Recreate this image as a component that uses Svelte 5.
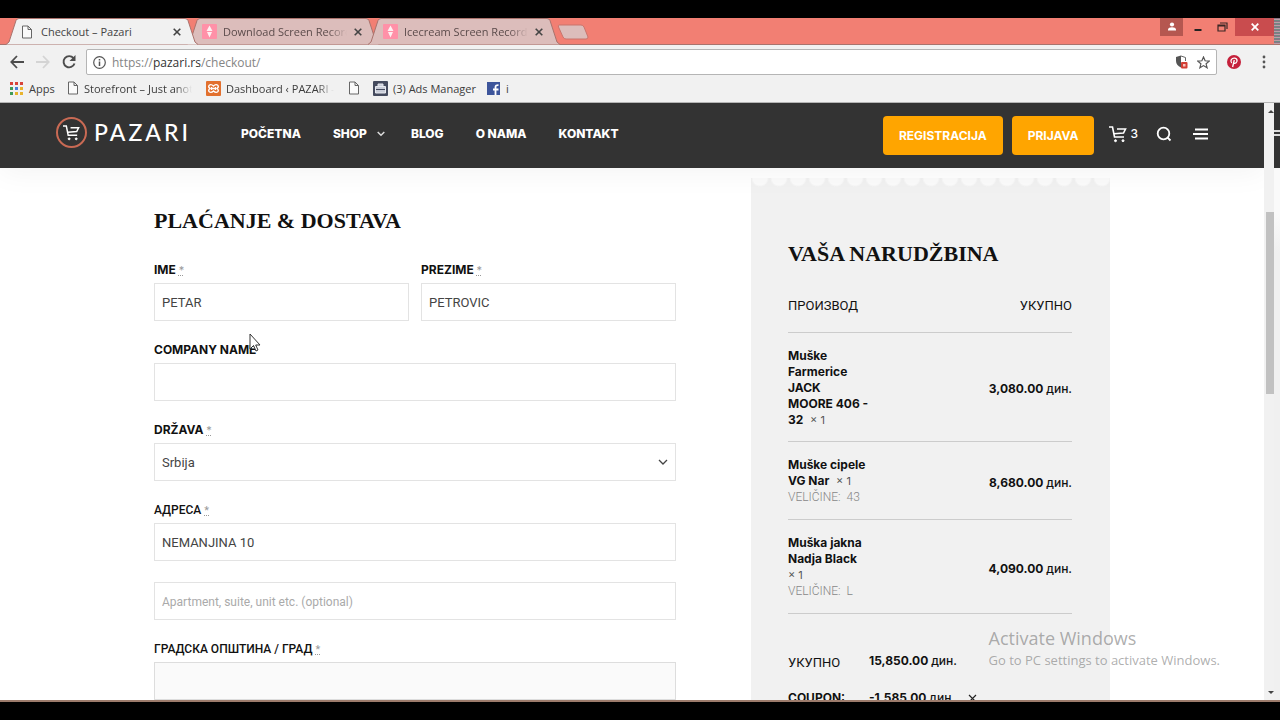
<script>
  const tabs = [
    { title: 'Checkout – Pazari', active: true },
    { title: 'Download Screen Recorder', active: false },
    { title: 'Icecream Screen Recorder', active: false }
  ];
  const nav = ['POČETNA', 'SHOP', 'BLOG', 'O NAMA', 'KONTAKT'];
  const items = [
    { name: 'Muške Farmerice JACK MOORE\u00a0406\u00a0- 32', meta: '', price: '3,080.00' },
    { name: 'Muške cipele VG Nar', meta: 'VELIČINE:  43', price: '8,680.00' },
    { name: 'Muška jakna Nadja Black', meta: 'VELIČINE:  L', price: '4,090.00' }
  ];
  const dots = ['#d8443a', '#d8443a', '#d8443a', '#3f9b56', '#4a80d8', '#e8b32c', '#3f9b56', '#e8b32c', '#e8b32c'];
</script>

{#snippet page()}
  <svg class="page-icon" width="12" height="14" viewBox="0 0 12 14" aria-hidden="true">
    <path d="M1.5 1h5.5l3.5 3.5V13h-9zM7 1v3.500h3.500" fill="#fafafa" stroke="#666" />
  </svg>
{/snippet}

{#snippet cart(size)}
  <svg width={size} height={size} viewBox="0 0 18 18" fill="none" stroke="#fff" stroke-width="1.600" aria-hidden="true">
    <path d="M0 2h3.500l2 10h9.500M5 8.800l9.500-.8L16.500 4H8" />
    <circle cx="6.500" cy="15.700" r="1" fill="#fff" stroke-width="1" />
    <circle cx="14" cy="15.700" r="1" fill="#fff" stroke-width="1" />
  </svg>
{/snippet}

{#snippet required()}
  <abbr title="required">*</abbr>
{/snippet}

<div class="screen">
  <div class="window">
    <div class="tabstrip">
      <div class="tabs">
        {#each tabs as tab}
          <div class="tab" class:active={tab.active}>
            <svg class="shape" viewBox="0 0 192 27" preserveAspectRatio="none" aria-hidden="true">
              <path d="M0 26.5 L3 24 L10 2.5 Q11 .5 13 .5 H179 Q181 .5 182 2.5 L189 24 L192 26.5" />
            </svg>
            {#if tab.active}
              {@render page()}
            {:else}
              <svg width="15" height="15" viewBox="0 0 15 15" aria-hidden="true">
                <rect width="15" height="15" rx="1" fill="#ff91a8" />
                <path d="M7.500 1.500L10.500 7h-6zM5 8h5L7.500 13.500z" fill="#fff0f2" />
              </svg>
            {/if}
            <span class="tab-title">{tab.title}</span>
            <button class="tab-close" aria-label="Close tab">
              <svg width="8" height="8" viewBox="0 0 8 8"><path d="M.7.7l6.600 6.600M7.300.7L.7 7.300" stroke="#444" stroke-width="1.600" /></svg>
            </button>
          </div>
        {/each}
        <button class="new-tab" aria-label="New tab">
          <svg width="32" height="17" viewBox="0 0 32 17"><path d="M2 1h22q2 0 3 2l4 10q0 2-2 2H9q-2 0-3-2L1.500 3Q1 1 2 1z" fill="#dcbdbb" stroke="#c9756d" /></svg>
        </button>
      </div>
      <div class="controls">
        <button class="user" aria-label="Profile">
          <svg width="10" height="10" viewBox="0 0 10 10"><circle cx="5" cy="2.500" r="2.100" fill="#fff" /><path d="M1 8.500V7.300Q1.500 5.300 5 5.300T9 7.300v1.200z" fill="#fff" /></svg>
        </button>
        <button aria-label="Minimize"><svg width="10" height="10" viewBox="0 0 10 10"><path d="M1.500 8h7" stroke="#222" stroke-width="2" /></svg></button>
        <button aria-label="Restore"><svg width="11" height="10" viewBox="0 0 11 10" fill="none" stroke="#3a2725"><path d="M1 3h7v6H1zM1 3.800h7M3 1h7v6" stroke-width="1.200" /></svg></button>
        <button class="close" aria-label="Close"><svg width="8" height="8" viewBox="0 0 8 8"><path d="M.7.7l6.600 6.600M7.300.7L.7 7.300" stroke="#fff" stroke-width="1.800" /></svg></button>
        <span class="noise"></span>
      </div>
    </div>

    <div class="toolbar">
      <button aria-label="Back"><svg width="14" height="14" viewBox="0 0 14 14" fill="none" stroke="#4c4c4c" stroke-width="1.800"><path d="M14 7H1.500M7 1L1.300 7 7 13" /></svg></button>
      <button aria-label="Forward"><svg width="14" height="14" viewBox="0 0 14 14" fill="none" stroke="#d4d4d4" stroke-width="1.800"><path d="M0 7h12.500M7 1l5.700 6L7 13" /></svg></button>
      <button aria-label="Reload"><svg width="14" height="14" viewBox="0 0 14 14"><path d="M11.500 3.200A5.600 5.600 0 1 0 12.500 8.500" fill="none" stroke="#4c4c4c" stroke-width="1.900" /><path d="M13.500 0v6h-6z" fill="#4c4c4c" /></svg></button>
      <div class="omnibox">
        <svg width="13" height="13" viewBox="0 0 13 13" fill="none" stroke="#555"><circle cx="6.500" cy="6.500" r="5.800" stroke-width="1.200" /><path d="M6.500 5.500v4.500M6.500 3v1.500" stroke-width="1.500" /></svg>
        <div class="url"><span>https://</span>pazari.rs<span>/checkout/</span></div>
        <svg width="13" height="14" viewBox="0 0 13 14" aria-hidden="true"><path d="M6 .5L1 2v4q0 4 5 6.500z" fill="#555" /><path d="M6 1l4.500 1.500V6" fill="none" stroke="#666" /><rect x="6" y="7" width="6.500" height="6.500" rx="1" fill="#d33f35" /><rect x="8" y="9" width="2.500" height="2.500" fill="#f5c4bf" /></svg>
        <svg width="13" height="13" viewBox="0 0 13 13" aria-hidden="true"><path d="M6.500 1l1.600 3.800 4.200.3-3.200 2.700 1 4-3.600-2.200-3.600 2.200 1-4L.7 5.100l4.200-.3z" fill="none" stroke="#555" stroke-width="1.200" /></svg>
      </div>
      <svg class="pin" width="14" height="14" viewBox="0 0 14 14" aria-hidden="true"><circle cx="7" cy="7" r="7" fill="#c5203b" /><path d="M4.700 8Q3.300 6.300 4.300 4.600 5.500 2.900 7.800 3.200q2.600.6 2.200 3Q9.300 8.800 7 8.200M7.300 5L5.600 12" fill="none" stroke="#fff" stroke-width="1.300" /></svg>
      <button aria-label="Menu"><svg width="4" height="14" viewBox="0 0 4 14" fill="#555"><circle cx="2" cy="2" r="1.400" /><circle cx="2" cy="7" r="1.400" /><circle cx="2" cy="12" r="1.400" /></svg></button>
    </div>

    <div class="bookmarks">
      <a href="#apps" class="apps">
        <svg width="13" height="13" viewBox="0 0 13 13" aria-hidden="true">
          {#each dots as c, i}<rect x={(i % 3) * 5} y={Math.floor(i / 3) * 5} width="3" height="3" fill={c} />{/each}
        </svg>
        Apps
      </a>
      <a href="#storefront" class="storefront">{@render page()}<span class="fade">Storefront – Just anot</span></a>
      <a href="#dashboard" class="dashboard">
        <svg width="15" height="15" viewBox="0 0 15 15" aria-hidden="true"><rect width="15" height="15" rx="1" fill="#e2702e" /><path d="M3 4.500q2-2 4.500.5Q10 2.500 12 4.500q1 1.500-1 3 2 1.500 1 3-2 2-4.500-.5Q5 12.500 3 10.500q-1-1.500 1-3-2-1.500-1-3zM5.500 6v3M9.500 6v3M5.500 7.500h4" fill="none" stroke="#fff" stroke-width="1.300" /></svg>
        <span class="fade">Dashboard ‹ PAZARI –</span>
      </a>
      <a href="#blank" class="blank" aria-label="Bookmark">{@render page()}</a>
      <a href="#ads" class="ads">
        <svg width="15" height="15" viewBox="0 0 15 15" aria-hidden="true"><rect width="15" height="15" rx="1" fill="#454b5e" /><path d="M5 5V3h5v2M2.500 5.500h10v6.500h-10z" fill="#c9cdd8" stroke="#e8eaf0" /><path d="M3 8.500h9" stroke="#454b5e" /></svg>
        (3) Ads Manager
      </a>
      <a href="#fb" class="fb">
        <svg width="13" height="13" viewBox="0 0 13 13" aria-hidden="true"><rect width="13" height="13" fill="#3d559b" /><path d="M8.500 13V8M6 7.500h5.500M8.500 8V5q0-2 3-1.800" fill="none" stroke="#fff" stroke-width="1.800" /></svg>
        i
      </a>
    </div>

    <div class="viewport">
      <div class="site">
        <header>
          <a class="logo" href="#home">
            <span class="ring">{@render cart(17)}</span>
            <span class="brand">PAZARI</span>
          </a>
          <nav>
            {#each nav as n}
              <a href="#{n}">{n}{#if n === 'SHOP'}<svg width="8" height="6" viewBox="0 0 8 6"><path d="M.7 1L4 4.300 7.300 1" fill="none" stroke="#ddd" stroke-width="1.500" /></svg>{/if}</a>
            {/each}
          </nav>
          <div class="actions">
            <a class="cta" href="#registracija">REGISTRACIJA</a>
            <a class="cta" href="#prijava">PRIJAVA</a>
            <div class="tools">
              <a class="cart" href="#cart">{@render cart(18)}<span>3</span></a>
              <button aria-label="Search"><svg width="16" height="16" viewBox="0 0 16 16" fill="none" stroke="#fff" stroke-width="1.800"><circle cx="7.500" cy="7.500" r="5.800" /><path d="M11.500 11.500l3 3" /></svg></button>
              <button aria-label="Open menu"><svg width="15" height="12" viewBox="0 0 15 12" stroke="#fff" stroke-width="1.800"><path d="M2 1.500h13M0 6h15M2 10.500h13" /></svg></button>
            </div>
          </div>
        </header>

        <main>
          <form>
            <h2>PLAĆANJE &amp; DOSTAVA</h2>
            <div class="pair">
              <div class="field"><label for="first">IME {@render required()}</label><input id="first" value="PETAR" /></div>
              <div class="field"><label for="last">PREZIME {@render required()}</label><input id="last" value="PETROVIC" /></div>
            </div>
            <div class="field"><label for="company">COMPANY NAME</label><input id="company" /></div>
            <div class="field">
              <label for="country">DRŽAVA {@render required()}</label>
              <div class="select">
                <select id="country"><option>Srbija</option></select>
                <svg width="10" height="7" viewBox="0 0 10 7" aria-hidden="true"><path d="M1 1l4 4 4-4" fill="none" stroke="#444" stroke-width="1.300" /></svg>
              </div>
            </div>
            <div class="field"><label class="cyr" for="address">АДРЕСА {@render required()}</label><input id="address" value="NEMANJINA 10" /></div>
            <div class="field"><input aria-label="Apartment" placeholder="Apartment, suite, unit etc. (optional)" /></div>
            <div class="field"><label class="cyr" for="city">ГРАДСКА ОПШТИНА / ГРАД {@render required()}</label><input id="city" class="muted" /></div>
          </form>

          <section class="order">
            <h2>VAŠA NARUDŽBINA</h2>
            <table class="items">
              <thead><tr><th class="cyr">ПРОИЗВОД</th><th class="cyr">УКУПНО</th></tr></thead>
              <tbody>
                {#each items as item}
                  <tr>
                    <td>
                      <div class="product"><b>{item.name}</b>&nbsp; <span class="qty">×&nbsp;1</span></div>
                      {#if item.meta}<div class="meta">{item.meta}</div>{/if}
                    </td>
                    <td class="price">{item.price} <span>дин.</span></td>
                  </tr>
                {/each}
              </tbody>
            </table>
            <table class="totals">
              <tbody>
                <tr><th class="cyr">УКУПНО</th><td class="price">15,850.00 <span>дин.</span></td></tr>
                <tr><th>COUPON:</th><td class="price">-1,585.00 <span>дин.</span>
                  <button aria-label="Remove coupon"><svg width="9" height="9" viewBox="0 0 9 9"><path d="M1 1l7 7M8 1L1 8" stroke="#222" stroke-width="1.200" /></svg></button></td></tr>
              </tbody>
            </table>
          </section>
        </main>
      </div>
      <div class="scrollbar">
        <svg width="6" height="4" viewBox="0 0 6 4"><path d="M0 4l3-3 3 3z" fill="#444" /></svg>
        <span class="thumb"></span>
        <svg width="6" height="4" viewBox="0 0 6 4"><path d="M0 0l3 3 3-3z" fill="#444" /></svg>
      </div>
      <div class="edge"><span></span></div>
    </div>
  </div>

  <svg class="cursor" width="13" height="20" viewBox="0 0 13 20" aria-hidden="true"><path d="M1 1v15l3.500-3.500L7 18l2-1-2.300-5H11z" fill="#fff" stroke="#333" /></svg>
  <div class="watermark"><strong>Activate Windows</strong><span>Go to PC settings to activate Windows.</span></div>
</div>

<style>
  :global(body) { background: #000; overflow: hidden; }
  * { box-sizing: border-box; }
  a { color: inherit; text-decoration: none; }
  button { border: 0; padding: 0; background: none; display: inline-flex; align-items: center; justify-content: center; }
  svg { flex: none; }
  .screen { position: relative; height: 100vh; padding: 18px 0; background: #000; font-family: "Open Sans", "Noto Sans", sans-serif; }
  .window { height: 100%; display: flex; flex-direction: column; background: #f1f1f1; border-bottom: 2px solid #9c7b6b; overflow: hidden; }

  .tabstrip { flex: none; display: flex; justify-content: space-between; height: 27px; background: #f27f73; border-bottom: 1px solid #a9736d; }
  .tabs { display: flex; height: 27px; padding-left: 6px; }
  .tab { position: relative; display: flex; align-items: center; gap: 6px; width: 192px; margin-right: -11px; padding: 0 16px 0 15px; font-size: 11px; color: #5b4b4b; }
  .tab.active { z-index: 1; color: #444; }
  .tab > :not(.shape) { position: relative; }
  .shape { position: absolute; inset: 0; width: 100%; height: 100%; }
  .shape path { fill: #dcbdbb; stroke: #a9736d; }
  .active .shape path { fill: #f1f1f1; }
  .tab-title { flex: 1; overflow: hidden; white-space: nowrap; }
  .tab:not(.active) .tab-title { -webkit-mask-image: linear-gradient(90deg, #000 85%, transparent); mask-image: linear-gradient(90deg, #000 85%, transparent); }
  .tab .page-icon { margin-right: 2px; }
  .tab-close { width: 10px; }
  .new-tab { margin-left: 8px; margin-top: 2px; }
  .controls { display: flex; align-items: flex-start; }
  .controls button { width: 24px; height: 18px; }
  .controls .user { width: 23px; background: #b55750; margin-right: 3px; }
  .controls .close { width: 39px; background: #c94c4e; margin-left: 1px; }
  .noise { width: 6px; height: 26px; background: repeating-linear-gradient(#8a7585 0 1px, #b9a0a8 1px 2px, #6f8a83 2px 3px); }

  .toolbar { flex: none; display: flex; align-items: center; gap: 12px; height: 34px; padding: 0 14px 0 10px; }
  .omnibox { flex: 1; display: flex; align-items: center; gap: 9px; height: 26px; margin-left: -2px; padding: 0 6px; background: #fff; border: 1px solid #b5b5b5; border-radius: 2px; }
  .url { flex: 1; margin-left: -3px; font-size: 12px; color: #333; }
  .url span { color: #858585; }
  .pin { margin: 0 9px 0 -2px; }
  .bookmarks { flex: none; display: flex; align-items: center; height: 24px; padding: 0 10px 5px; border-bottom: 1px solid #b5b5b5; font-size: 11px; color: #3c3c3c; }
  .bookmarks a { display: flex; align-items: center; gap: 5px; white-space: nowrap; overflow: hidden; }
  .fade { overflow: hidden; -webkit-mask-image: linear-gradient(90deg, #000 85%, transparent); mask-image: linear-gradient(90deg, #000 85%, transparent); }
  .bookmarks .apps { width: 57px; gap: 6px; }
  .storefront { width: 125px; margin-right: 14px; }
  .dashboard { width: 128px; margin-right: 14px; }
  .blank { width: 25px; }
  .ads { width: 114px; }
  .bookmarks .fb { gap: 6px; }

  .viewport { flex: 1; min-height: 0; display: flex; background: #fff; }
  .site { flex: 1; min-width: 0; overflow: hidden; }
  header { position: relative; display: flex; align-items: center; height: 65px; padding: 0 56px; background: #333; color: #fff; box-shadow: 0 4px 30px rgba(0, 0, 0, 0.05); z-index: 1; font-family: Inter, sans-serif; }
  .logo { display: flex; align-items: center; gap: 7px; width: 185px; margin-bottom: 7px; }
  .ring { display: flex; align-items: center; justify-content: center; width: 31px; height: 31px; border: 2px solid #c96a54; border-radius: 50%; }
  .brand { font-family: Lato, sans-serif; font-size: 23px; line-height: 31px; letter-spacing: 3px; font-weight: 500; }
  nav { display: flex; gap: 32px; margin-bottom: 4px; font-size: 12px; font-weight: 800; }
  nav a { display: flex; align-items: center; gap: 10px; white-space: nowrap; }
  nav svg { margin-right: -6px; }
  .actions { display: flex; align-items: center; margin-left: auto; }
  .cta { display: flex; align-items: center; height: 39px; padding: 0 16px; margin-right: 9px; border-radius: 4px; background: #ffa500; font-size: 12px; font-weight: 700; }
  .tools { display: flex; align-items: center; margin-bottom: 4px; }
  .cart { display: flex; align-items: center; gap: 3px; margin: 0 18px 0 6px; font-size: 12px; font-weight: 500; }
  .tools button + button { margin-left: 21px; }

  main { display: grid; grid-template-columns: minmax(0, 522fr) minmax(0, 359fr); gap: 75px; width: 76%; max-width: 956px; margin: 0 auto; }
  h2 { margin: 0; font: bold 22px/26px "Liberation Serif", serif; color: #111; }
  form { padding-top: 40px; }
  form h2 { margin-bottom: 28px; }
  .pair { display: grid; grid-template-columns: 1fr 1fr; gap: 12px; }
  .field { display: flex; flex-direction: column; margin-bottom: 21px; }
  label { height: 16px; font: 700 12px/16px Inter, sans-serif; color: #111; margin-bottom: 5px; }
  .cyr { font: 400 13px/16px Roboto, sans-serif; }
  label.cyr { font-weight: 500; font-size: 12px; }
  abbr { font-weight: 400; font-size: 11px; color: #999; text-decoration: underline dotted; }
  input, select { width: 100%; height: 38px; padding: 0 7px; border: 1px solid #e3e3e3; border-radius: 0; outline: 0; background: #fff; font: 13px Roboto, sans-serif; color: #444; appearance: none; }
  input::placeholder { color: #aaa; opacity: 1; font-size: 12px; }
  .muted { background: #fafafa; border-color: #ddd; }
  .select { display: grid; align-items: center; }
  .select > * { grid-area: 1 / 1; }
  .select svg { justify-self: end; margin-right: 8px; }

  .order { margin-top: 10px; padding: 63px 38px 0 37px; background: radial-gradient(circle at 9px 0, #fbfbfb 7px, transparent 9px) 0 0 / 19px 10px repeat-x, #f1f1f1; font-family: Inter, sans-serif; min-height: 620px; }
  table { width: 100%; border-collapse: collapse; font-size: 12px; line-height: 16px; color: #111; }
  th { text-align: left; font-weight: 700; padding: 0; }
  th.cyr { padding-top: 3px; }
  .items { margin-top: 10px; }
  .items th { height: 55px; }
  .items th:last-child, .items td:last-child { text-align: right; }
  .items tr { border-bottom: 1px solid #ccc; }
  td { padding: 15px 0 13px; }
  .items .price { padding-top: 18px; }
  .product { width: 82px; }
  .qty { font-size: 11px; color: #555; white-space: nowrap; }
  .meta { font: 300 12px/17px Roboto, sans-serif; color: #888; white-space: pre; }
  .price { font-weight: 700; }
  .price span { font-weight: 500; }
  .totals { margin-top: 29px; }
  .totals th { width: 81px; }
  .totals td { padding: 0; height: 37px; }
  .totals button { margin-left: 10px; vertical-align: middle; }

  .scrollbar { flex: none; width: 10px; display: flex; flex-direction: column; align-items: flex-end; justify-content: space-between; padding: 6px 0 5px; background: #f1f1f1; }
  .thumb { width: 8px; height: 182px; margin-bottom: 198px; background: #c1c1c1; }
  .edge { width: 6px; background: linear-gradient(#333 65px, #fafafa 65px 110px, #f0f0f0 150px); }
  .edge span { display: block; height: 6px; margin-top: 27px; border: solid #ddd; border-width: 2px 0; }

  .cursor { position: absolute; left: 249px; top: 333px; }
  .watermark { position: absolute; right: 60px; bottom: 51px; display: flex; flex-direction: column; color: rgba(130, 130, 130, 0.65); font-size: 13px; line-height: 18px; }
  .watermark strong { font-size: 18px; line-height: 26px; font-weight: 400; }
</style>
